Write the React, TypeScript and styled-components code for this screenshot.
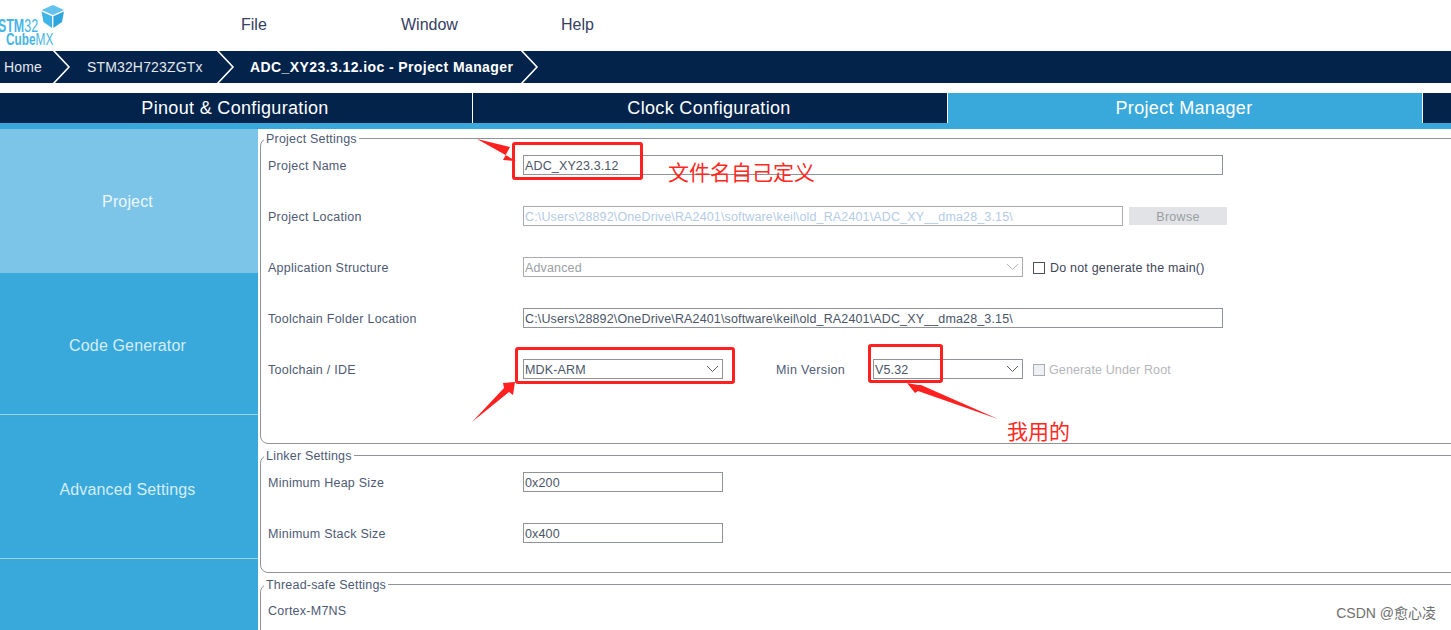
import React from "react";
import styled, { createGlobalStyle } from "styled-components";

const navy = "#03234b";
const blue = "#39a9dc";
const red = "#ff2020";

const GlobalStyle = createGlobalStyle`
  html, body {
    margin: 0;
    padding: 0;
    height: 630px;
    overflow: hidden;
    background: #fff;
    font-family: "Liberation Sans", Arial, sans-serif;
  }
`;

const Page = styled.div`
  position: relative;
  width: 1451px;
  height: 630px;
  overflow: hidden;
`;

const TopBar = styled.header`
  display: flex;
  align-items: center;
  height: 51px;
`;

const Logo = styled.div`
  position: relative;
  width: 241px;
  height: 51px;
  flex: none;
`;

const LogoLine = styled.div<{ $left: number; $top: number; $size: number; $squeeze: number }>`
  position: absolute;
  left: ${(p) => p.$left}px;
  top: ${(p) => p.$top}px;
  font-size: ${(p) => p.$size}px;
  line-height: 14px;
  color: #45b5e6;
  white-space: nowrap;
  transform: scaleX(${(p) => p.$squeeze});
  transform-origin: left center;
  b {
    font-weight: 700;
  }
`;

const CubeIcon = styled.svg`
  position: absolute;
  left: 40px;
  top: 4px;
`;

const MenuItem = styled.div`
  width: 160px;
  padding-bottom: 2px;
  font-size: 16px;
  color: #34405f;
`;

const Crumbs = styled.nav`
  display: flex;
  align-items: center;
  height: 32px;
  background: ${navy};
  color: #fff;
  font-size: 14px;
`;

const Crumb = styled.span<{ $width: number; $pad: number; $current?: boolean }>`
  box-sizing: border-box;
  width: ${(p) => p.$width}px;
  padding-left: ${(p) => p.$pad}px;
  flex: none;
  font-weight: ${(p) => (p.$current ? 700 : 400)};
  letter-spacing: ${(p) => (p.$current ? "0.41px" : "0.15px")};
  color: ${(p) => (p.$current ? "#fff" : "#e4e8ee")};
  white-space: nowrap;
`;

const CrumbArrow = styled.svg`
  flex: none;
`;

const Tabs = styled.div`
  display: flex;
  height: 30px;
  margin-top: 10px;
  background: ${navy};
  border-bottom: 6px solid ${blue};
`;

const Tab = styled.div<{ $active?: boolean; $width: number }>`
  width: ${(p) => p.$width}px;
  flex: none;
  box-sizing: border-box;
  padding-right: 2px;
  border-right: 1px solid #fff;
  background: ${(p) => (p.$active ? blue : navy)};
  color: #fff;
  font-size: 18px;
  letter-spacing: 0.33px;
  line-height: 31px;
  text-align: center;
`;

const Body = styled.div`
  display: flex;
  height: 501px;
`;

const Sidebar = styled.aside`
  width: 258px;
  flex: none;
  background: ${blue};
`;

const SideItem = styled.div<{ $height: number; $shift: number; $active?: boolean }>`
  display: flex;
  align-items: center;
  justify-content: center;
  box-sizing: border-box;
  height: ${(p) => p.$height}px;
  padding: ${(p) => p.$shift}px 3px 0 0;
  background: ${(p) => (p.$active ? "#7cc5e9" : "transparent")};
  border-bottom: ${(p) => (p.$active ? "none" : "1px solid #9cd4ee")};
  color: ${(p) => (p.$active ? "#edf7fc" : "#d5edf8")};
  font-size: 16px;
  letter-spacing: 0.15px;
`;

const Main = styled.main`
  flex: none;
  width: 1250px;
  margin-left: 2px;
`;

const Group = styled.fieldset<{ $height: number; $top: number }>`
  box-sizing: border-box;
  height: ${(p) => p.$height}px;
  margin: ${(p) => p.$top}px 0 0;
  padding: 0 0 0 7px;
  border: 1px solid #8f9498;
  border-radius: 8px;
`;

const GroupTitle = styled.legend`
  height: 16px;
  margin: 0 0 -6px -4px;
  padding: 0 2px;
  font-size: 12.5px;
  line-height: 18px;
  letter-spacing: 0.2px;
  color: #4e5a74;
`;

const Row = styled.div<{ $height?: number }>`
  display: flex;
  align-items: center;
  height: ${(p) => p.$height ?? 51}px;
`;

const Label = styled.label`
  width: 255px;
  flex: none;
  font-size: 12.5px;
  letter-spacing: 0.25px;
  color: #4e5a74;
`;

const Field = styled.div<{ $width: number; $dim?: "blue" | "grey" }>`
  display: flex;
  align-items: center;
  justify-content: space-between;
  box-sizing: border-box;
  width: ${(p) => p.$width}px;
  height: 20px;
  flex: none;
  margin-bottom: 2px;
  padding: 3px 1px 0;
  border: 1px solid #8f9498;
  font-size: 12.5px;
  letter-spacing: 0.14px;
  white-space: nowrap;
  color: ${(p) =>
    p.$dim === "blue" ? "#b4cbe6" : p.$dim === "grey" ? "#9aa0a6" : "#4a5568"};
  border-color: ${(p) => (p.$dim ? "#a8acb0" : "#8f9498")};
`;

const Chevron = styled.svg`
  margin: -2px 2px 0 0;
  flex: none;
`;

const BrowseButton = styled.div`
  width: 98px;
  height: 18px;
  margin: 0 0 2px 6px;
  background: #e1e3e6;
  color: #9a9ea3;
  font-size: 12.5px;
  line-height: 21px;
  letter-spacing: 0.3px;
  text-align: center;
`;

const CheckWrap = styled.div<{ $disabled?: boolean }>`
  display: flex;
  align-items: center;
  gap: ${(p) => (p.$disabled ? 4 : 5)}px;
  margin-left: 10px;
  font-size: 12.5px;
  letter-spacing: ${(p) => (p.$disabled ? 0.12 : 0.2)}px;
  color: ${(p) => (p.$disabled ? "#b3b6ba" : "#3e4658")};
`;

const CheckBox = styled.span<{ $disabled?: boolean }>`
  box-sizing: border-box;
  width: 12px;
  height: 12px;
  border: 1px solid ${(p) => (p.$disabled ? "#a8acb0" : "#4c5057")};
  background: ${(p) => (p.$disabled ? "#eef0f3" : "#fff")};
`;

const MinLabel = styled.span`
  width: 97px;
  flex: none;
  margin-left: 53px;
  font-size: 12.5px;
  letter-spacing: 0.35px;
  color: #4e5a74;
`;

const Highlight = styled.div<{ $x: number; $y: number; $w: number; $h: number }>`
  position: absolute;
  left: ${(p) => p.$x}px;
  top: ${(p) => p.$y}px;
  width: ${(p) => p.$w}px;
  height: ${(p) => p.$h}px;
  box-sizing: border-box;
  border: 3px solid ${red};
  border-radius: 3px;
`;

const Note = styled.div<{ $x: number; $y: number }>`
  position: absolute;
  left: ${(p) => p.$x}px;
  top: ${(p) => p.$y}px;
  font-family: "Noto Sans CJK SC", sans-serif;
  font-size: 21px;
  line-height: 26px;
  color: #ff2a1f;
  white-space: nowrap;
`;

const ArrowLayer = styled.svg`
  position: absolute;
  left: 0;
  top: 0;
  pointer-events: none;
`;

const Watermark = styled.div`
  position: absolute;
  right: 15px;
  bottom: 8px;
  font-family: "Liberation Sans", "Noto Sans CJK SC", sans-serif;
  font-size: 14px;
  line-height: 18px;
  color: #6f6f6f;
  white-space: nowrap;
`;

const Arrow = () => (
  <CrumbArrow width="20" height="32" viewBox="0 0 20 32">
    <path d="M2 -1 L18 16 L2 33" fill="none" stroke="#fff" strokeWidth="1.6" />
  </CrumbArrow>
);

const Down = ({ color = "#5b6066" }: { color?: string }) => (
  <Chevron width="13" height="8" viewBox="0 0 13 8">
    <path d="M1 1 L6.5 6.5 L12 1" fill="none" stroke={color} strokeWidth="1" />
  </Chevron>
);

const App: React.FC = () => (
  <Page>
    <GlobalStyle />
    <TopBar>
      <Logo>
        <LogoLine $left={-2} $top={19} $size={18} $squeeze={0.69}>
          <b>STM</b>32
        </LogoLine>
        <LogoLine $left={6} $top={33} $size={16} $squeeze={0.74}>
          <b>Cube</b>MX
        </LogoLine>
        <CubeIcon width="25" height="25" viewBox="0 0 25 25">
          <path d="M1.5 6 L13 1 L24 6 L13 11 Z" fill="#63c3ee" />
          <path d="M1.5 7.5 L12 12.3 L12 24 L3.5 18 Z" fill="#3fb4e6" />
          <path d="M24 7.5 L13.4 12.3 L13.4 24 L22 18 Z" fill="#2ea6dd" />
        </CubeIcon>
      </Logo>
      <MenuItem>File</MenuItem>
      <MenuItem>Window</MenuItem>
      <MenuItem>Help</MenuItem>
    </TopBar>

    <Crumbs>
      <Crumb $width={51} $pad={4}>
        Home
      </Crumb>
      <Arrow />
      <Crumb $width={144} $pad={16}>
        STM32H723ZGTx
      </Crumb>
      <Arrow />
      <Crumb $width={284} $pad={15} $current>
        ADC_XY23.3.12.ioc - Project Manager
      </Crumb>
      <Arrow />
    </Crumbs>

    <Tabs>
      <Tab $width={473}>Pinout &amp; Configuration</Tab>
      <Tab $width={475}>Clock Configuration</Tab>
      <Tab $width={475} $active>
        Project Manager
      </Tab>
    </Tabs>

    <Body>
      <Sidebar>
        <SideItem $height={144} $shift={2} $active>
          Project
        </SideItem>
        <SideItem $height={142} $shift={4}>
          Code Generator
        </SideItem>
        <SideItem $height={144} $shift={6}>
          Advanced Settings
        </SideItem>
      </Sidebar>

      <Main>
        <Group $height={314} $top={1}>
          <GroupTitle>Project Settings</GroupTitle>
          <Row>
            <Label>Project Name</Label>
            <Field $width={700}>ADC_XY23.3.12</Field>
          </Row>
          <Row>
            <Label>Project Location</Label>
            <Field $width={600} $dim="blue">
              C:\Users\28892\OneDrive\RA2401\software\keil\old_RA2401\ADC_XY__dma28_3.15\
            </Field>
            <BrowseButton>Browse</BrowseButton>
          </Row>
          <Row>
            <Label>Application Structure</Label>
            <Field $width={500} $dim="grey">
              Advanced
              <Down color="#b0b3b7" />
            </Field>
            <CheckWrap>
              <CheckBox />
              Do not generate the main()
            </CheckWrap>
          </Row>
          <Row>
            <Label>Toolchain Folder Location</Label>
            <Field $width={700}>
              C:\Users\28892\OneDrive\RA2401\software\keil\old_RA2401\ADC_XY__dma28_3.15\
            </Field>
          </Row>
          <Row>
            <Label>Toolchain / IDE</Label>
            <Field $width={200}>
              MDK-ARM
              <Down />
            </Field>
            <MinLabel>Min Version</MinLabel>
            <Field $width={150}>
              V5.32
              <Down />
            </Field>
            <CheckWrap $disabled>
              <CheckBox $disabled />
              Generate Under Root
            </CheckWrap>
          </Row>
        </Group>

        <Group $height={126} $top={3}>
          <GroupTitle>Linker Settings</GroupTitle>
          <Row>
            <Label>Minimum Heap Size</Label>
            <Field $width={200}>0x200</Field>
          </Row>
          <Row>
            <Label>Minimum Stack Size</Label>
            <Field $width={200}>0x400</Field>
          </Row>
        </Group>

        <Group $height={100} $top={3}>
          <GroupTitle>Thread-safe Settings</GroupTitle>
          <Row $height={49}>
            <Label>Cortex-M7NS</Label>
          </Row>
        </Group>
      </Main>
    </Body>

    <Highlight $x={512} $y={142} $w={131} $h={38} />
    <Highlight $x={515} $y={347} $w={220} $h={37} />
    <Highlight $x={868} $y={344} $w={75} $h={39} />
    <ArrowLayer width="1451" height="630" viewBox="0 0 1451 630">
      <path d="M477 139 L516 161 L503 160 L510 147 Z" fill={red} />
      <path d="M472 422 L504 388 L503 383 L515 382 L513 395 L509 392 Z" fill={red} />
      <path d="M998 419 L921 385 L918 385 L907 383 L915 393 L918 391 Z" fill={red} />
    </ArrowLayer>
    <Note $x={668} $y={158}>文件名自己定义</Note>
    <Note $x={1007} $y={417}>我用的</Note>
    <Watermark>CSDN @愈心凌</Watermark>
  </Page>
);

export default App;
